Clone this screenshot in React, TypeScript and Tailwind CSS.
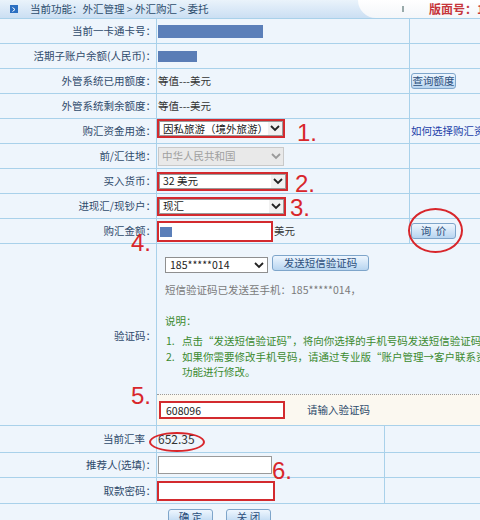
import React from "react";

const line = "border-[#a9d1ea]";

function Chevron({ gray }: { gray?: boolean }) {
  return (
    <svg width="10" height="7" viewBox="0 0 10 7">
      <path d="M1 1 L5 5 L9 1" fill="none" stroke={gray ? "#9a9a9a" : "#222"} strokeWidth="1.8" />
    </svg>
  );
}

function Select({ text, width, disabled, red }: { text: string; width: string; disabled?: boolean; red?: boolean }) {
  return (
    <div className={`${width} ${red ? "border-2 border-[#d32a2e]" : ""} h-[19px] shrink-0`}>
      <div
        className={`flex h-full items-center border ${disabled ? "border-[#c9c9c9] bg-[#e9e9e9] text-[#a0a0a0]" : "border-[#9a9a9a] bg-white text-[#222]"}`}
      >
        <span className="min-w-0 flex-1 overflow-hidden whitespace-nowrap pl-[3px]">{text}</span>
        <span className={`flex h-full w-[14px] shrink-0 items-center justify-center ${disabled ? "" : "bg-[#f1f1f1]"}`}>
          <Chevron gray={disabled} />
        </span>
      </div>
    </div>
  );
}

function Btn({ children, width }: { children: React.ReactNode; width: string }) {
  return (
    <div
      className={`${width} flex h-[16px] items-center justify-center rounded-[3px] border border-[#7ea5ca] bg-gradient-to-b from-[#eef6fe] to-[#b8d5f0] text-[#2c4f7c]`}
    >
      {children}
    </div>
  );
}

function Num({ children, className }: { children: React.ReactNode; className: string }) {
  return (
    <span className={`absolute z-10 font-['Liberation_Sans',sans-serif] text-[24px] leading-none text-[#d8262b] ${className}`}>
      {children}
    </span>
  );
}

function Row({
  label,
  children,
  extra,
  h = "h-[25px]",
  mid = "w-[253px]",
  labelExtra,
  labelPad = "",
}: {
  label: string;
  children?: React.ReactNode;
  extra?: React.ReactNode;
  h?: string;
  mid?: string;
  labelExtra?: React.ReactNode;
  labelPad?: string;
}) {
  return (
    <div className={`flex ${h} border-b ${line}`}>
      <div className={`relative flex w-[157px] shrink-0 items-center justify-end border-r ${line} ${labelPad} text-[#2e4a6b]`}>
        {label}
        {labelExtra}
      </div>
      <div className={`relative flex ${mid} shrink-0 items-center border-r ${line}`}>{children}</div>
      <div className="relative flex min-w-0 flex-1 items-center overflow-visible whitespace-nowrap">{extra}</div>
    </div>
  );
}

export default function App() {
  return (
    <div className="h-[520px] w-[480px] overflow-hidden bg-[#eef5fc] font-['Noto_Sans_CJK_SC',sans-serif] text-[10.5px] text-[#333]">
      {/* header */}
      <div className={`flex h-[19px] border-b ${line} bg-gradient-to-b from-[#eaf3fb] to-[#cbdff3]`}>
        <div className="flex flex-1 items-center">
          <div className="ml-[10px] flex h-[8px] w-[8px] items-center justify-center bg-[#2b6fc1]">
            <svg width="4" height="5" viewBox="0 0 4 5">
              <path d="M0.5 0.5 L3 2.5 L0.5 4.5" fill="none" stroke="#fff" strokeWidth="1" />
            </svg>
          </div>
          <span className="ml-[12px] text-[#2c4c6c]">当前功能：外汇管理 &gt; 外汇购汇 &gt; 委托</span>
        </div>
        <div className="flex w-[122px] items-center rounded-bl-[34px] bg-gradient-to-b from-[#ffffff] to-[#f3f6f9]">
          <span className="ml-[44px] h-[6px] w-[6px] border border-[#9aa] bg-[#dde]" />
          <span className="ml-[25px] whitespace-nowrap text-[12px] font-bold text-[#c6363b]">版面号：10</span>
        </div>
      </div>

      <Row label="当前一卡通卡号：">
        <div className="ml-[1px] h-[13px] w-[105px] bg-[#5b7fb9]" />
      </Row>
      <Row label="活期子账户余额(人民币)：">
        <div className="ml-[1px] h-[11px] w-[39px] bg-[#5a7db6]" />
      </Row>
      <Row
        label="外管系统已用额度："
        extra={
          <div className="ml-[1px]">
            <Btn width="w-[45px]">查询额度</Btn>
          </div>
        }
      >
        <span className="ml-[1px]">等值---美元</span>
      </Row>
      <Row label="外管系统剩余额度：">
        <span className="ml-[1px]">等值---美元</span>
      </Row>
      <Row
        label="购汇资金用途："
        extra={<span className="ml-[1px] text-[#1d3fa8]">如何选择购汇资金用途</span>}
      >
        <div className="-mt-[5px]">
          <Select text="因私旅游（境外旅游）" width="w-[128px]" red />
        </div>
        <Num className="left-[140px] top-[2px]">1.</Num>
      </Row>
      <Row label="前/汇往地：">
        <div className="ml-[1px]">
          <Select text="中华人民共和国" width="w-[126px]" disabled />
        </div>
      </Row>
      <Row label="买入货币：">
        <Select text="32 美元" width="w-[131px]" red />
        <Num className="left-[138px] top-[3px]">2.</Num>
      </Row>
      <Row label="进现汇/现钞户：">
        <Select text="现汇" width="w-[129px]" red />
        <Num className="left-[133px] top-[2px]">3.</Num>
      </Row>
      <Row
        label="购汇金额："
        labelExtra={<Num className="right-[5px] top-[12px]">4.</Num>}
        extra={
          <div className="ml-[1px]">
            <Btn width="w-[45px]">询&nbsp;&nbsp;价</Btn>
            <div className="absolute -left-[2px] -top-[11px] z-10 h-[45px] w-[55px] rounded-[50%] border-2 border-[#d8262b]" />
          </div>
        }
      >
        <div className="h-[21px] w-[116px] border-2 border-[#d32a2e] bg-white">
          <div className="ml-[1px] mt-[4px] h-[10px] w-[12px] bg-[#5b7fb9]" />
        </div>
        <span className="ml-[1px]">美元</span>
      </Row>

      {/* 验证码 */}
      <div className={`flex h-[182px] border-b ${line}`}>
        <div className={`relative flex w-[157px] shrink-0 items-center justify-end border-r ${line} pt-[2px] text-[#2e4a6b]`}>
          验证码：
          <Num className="right-[5px] top-[140px]">5.</Num>
        </div>
        <div className="flex flex-1 flex-col">
          <div className="h-[151px] pl-[8px] pt-[11px]">
            <div className="flex items-start gap-[4px]">
              <div className="mt-[2px] flex h-[16px] w-[103px] items-center border border-[#8f8f8f] bg-white text-[#222]">
                <span className="flex-1 pl-[4px]">185*****014</span>
                <span className="mr-[3px]">
                  <Chevron />
                </span>
              </div>
              <Btn width="w-[97px]">发送短信验证码</Btn>
            </div>
            <div className="mt-[9px] text-[#7a7a7a]">短信验证码已发送至手机：185*****014，</div>
            <div className="mt-[15px] text-[#3b8a2f]">说明：</div>
            <div className="mt-[4px] flex text-[#3b8a2f]">
              <span className="w-[17px] shrink-0 pl-[1px]">1.</span>
              <span className="whitespace-nowrap">点击“发送短信验证码”，将向你选择的手机号码发送短信验证码。</span>
            </div>
            <div className="mt-[1px] flex text-[#3b8a2f]">
              <span className="w-[17px] shrink-0 pl-[1px]">2.</span>
              <span className="leading-[15px]">
                <span className="whitespace-nowrap">如果你需要修改手机号码，请通过专业版“账户管理→客户联系资料修改”</span>
                <br />
                功能进行修改。
              </span>
            </div>
          </div>
          <div className="flex h-[31px] items-center border-t border-dotted border-[#9a9a9a] bg-[#fbf8f0]">
            <div className="ml-[2px] h-[18px] w-[126px] border-2 border-[#d32a2e] bg-white">
              <span className="ml-[5px] leading-[14px] text-[#222]">608096</span>
            </div>
            <span className="ml-[22px] text-[#2e4a6b]">请输入验证码</span>
          </div>
        </div>
      </div>

      {/* lower table */}
      <Row label="当前汇率" labelPad="pr-[11px]" h="h-[27px]" mid="w-[228px]">
        <span className="ml-[1px] text-[12px] text-[#333]">652.35</span>
        <div className="absolute -left-[8px] top-[6px] h-[20px] w-[56px] rounded-[50%] border-2 border-[#d8262b]" />
      </Row>
      <Row label="推荐人(选填)：" mid="w-[228px]">
        <div className="ml-[1px] h-[18px] w-[114px] border border-[#9a9a9a] bg-white" />
        <Num className="left-[115px] top-[6px]">6.</Num>
      </Row>
      <Row label="取款密码：" h="h-[26px]" mid="w-[228px]">
        <div className="h-[20px] w-[118px] border-2 border-[#d32a2e] bg-white" />
      </Row>
      <div className="flex gap-[13px] pl-[168px] pt-[5px]">
        <Btn width="w-[45px]">确&nbsp;定</Btn>
        <Btn width="w-[45px]">关&nbsp;闭</Btn>
      </div>
    </div>
  );
}
